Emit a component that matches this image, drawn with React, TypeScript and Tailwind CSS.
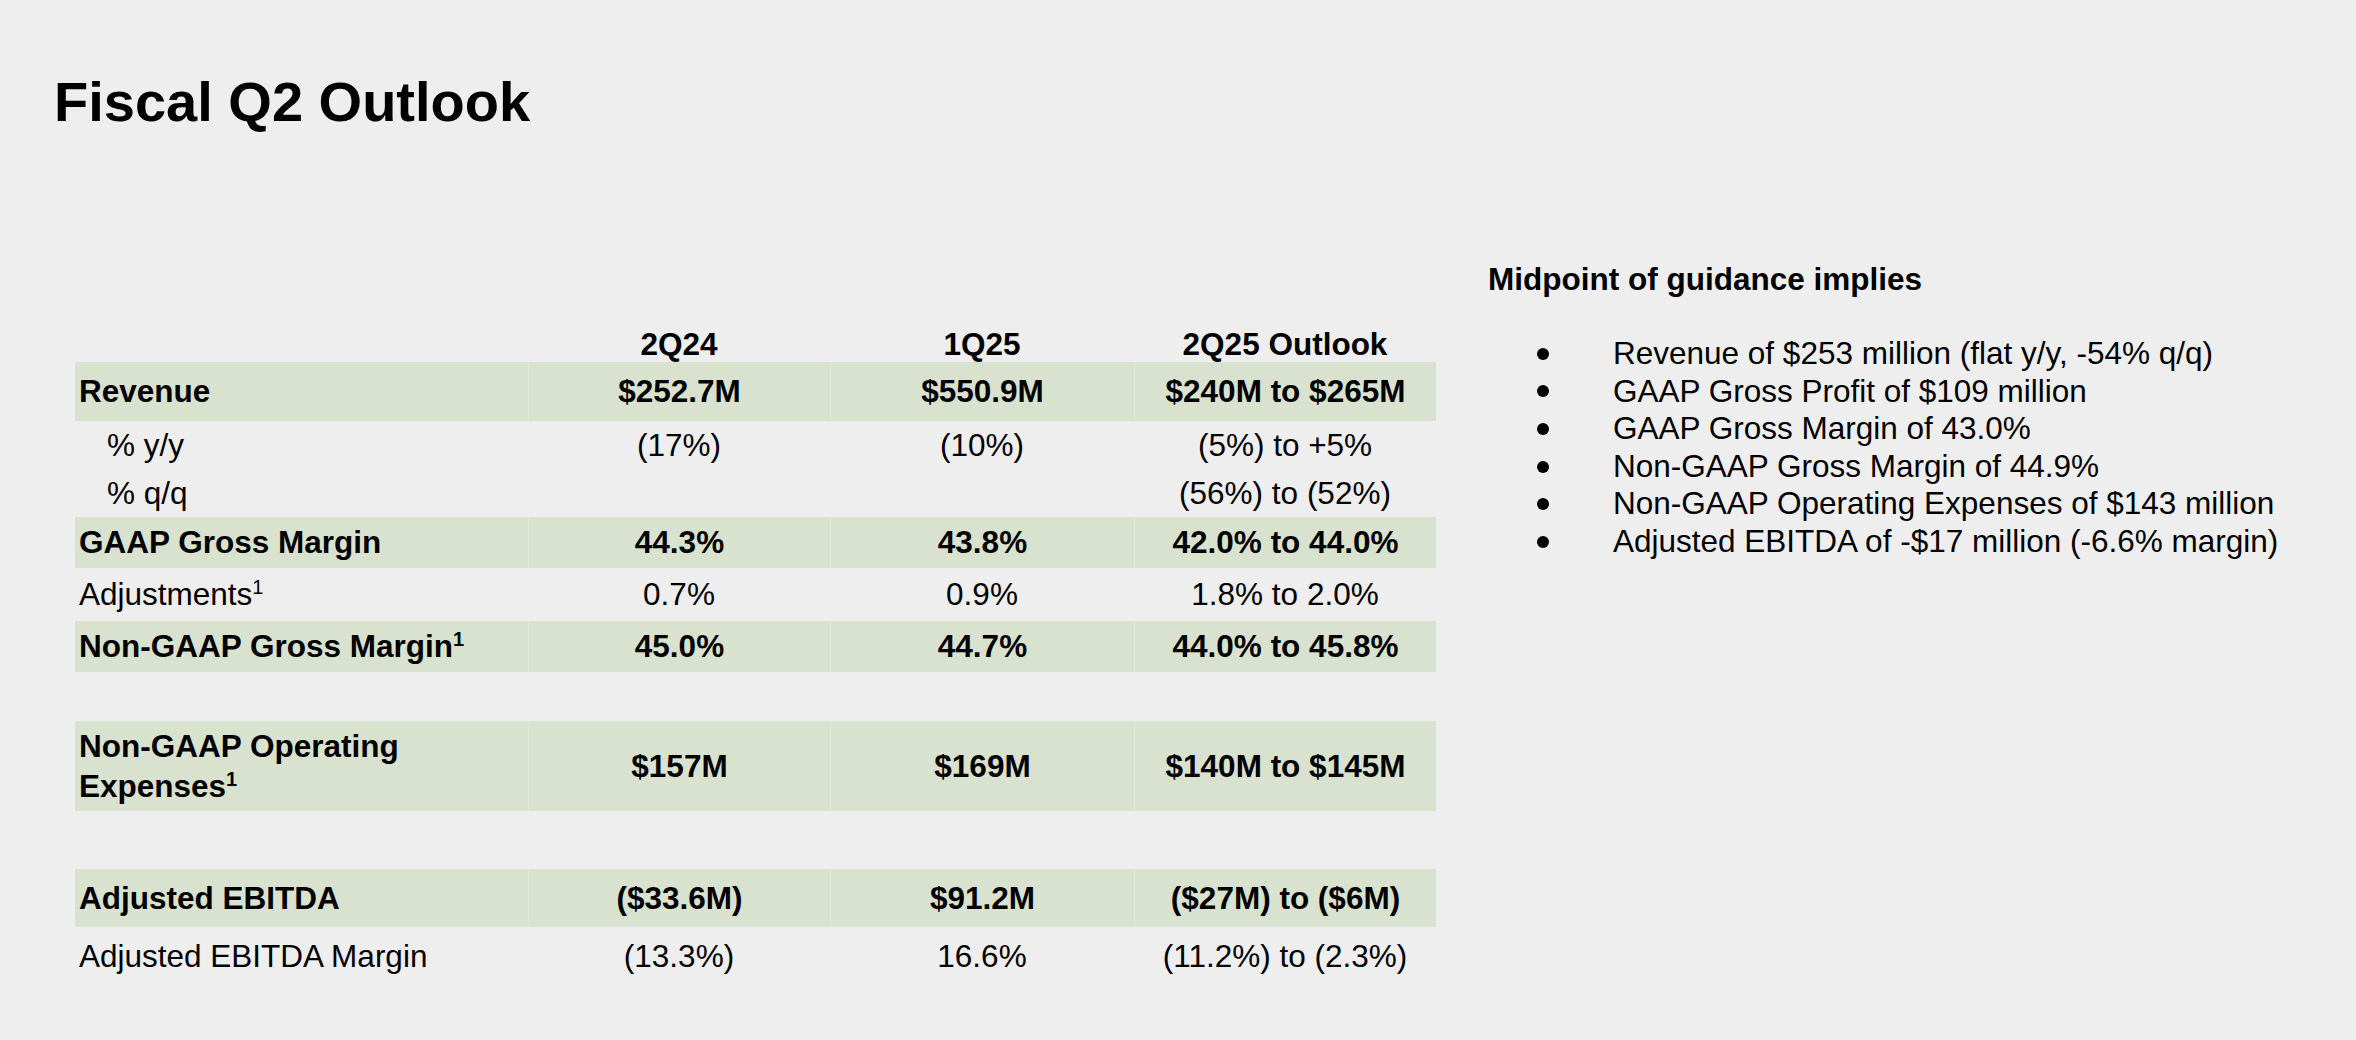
import React from "react";

type Row = {
  kind: "header" | "green" | "plain" | "spacer";
  h: number;
  label?: React.ReactNode;
  vals?: string[];
  indent?: boolean;
};

const Sup = () => (
  <sup className="text-[20px] relative -top-[11px] align-baseline leading-none">1</sup>
);

const rows: Row[] = [
  { kind: "header", h: 44, label: "", vals: ["2Q24", "1Q25", "2Q25 Outlook"] },
  { kind: "green", h: 59, label: "Revenue", vals: ["$252.7M", "$550.9M", "$240M to $265M"] },
  { kind: "plain", h: 48, label: "% y/y", indent: true, vals: ["(17%)", "(10%)", "(5%) to +5%"] },
  { kind: "plain", h: 48, label: "% q/q", indent: true, vals: ["", "", "(56%) to (52%)"] },
  { kind: "green", h: 51, label: "GAAP Gross Margin", vals: ["44.3%", "43.8%", "42.0% to 44.0%"] },
  {
    kind: "plain",
    h: 53,
    label: (
      <>
        Adjustments
        <Sup />
      </>
    ),
    vals: ["0.7%", "0.9%", "1.8% to 2.0%"],
  },
  {
    kind: "green",
    h: 51,
    label: (
      <>
        Non-GAAP Gross Margin
        <Sup />
      </>
    ),
    vals: ["45.0%", "44.7%", "44.0% to 45.8%"],
  },
  { kind: "spacer", h: 49 },
  {
    kind: "green",
    h: 90,
    label: (
      <span className="block leading-[40px]">
        Non-GAAP Operating
        <br />
        Expenses
        <Sup />
      </span>
    ),
    vals: ["$157M", "$169M", "$140M to $145M"],
  },
  { kind: "spacer", h: 58 },
  { kind: "green", h: 58, label: "Adjusted EBITDA", vals: ["($33.6M)", "$91.2M", "($27M) to ($6M)"] },
  {
    kind: "plain",
    h: 59,
    label: "Adjusted EBITDA Margin",
    vals: ["(13.3%)", "16.6%", "(11.2%) to (2.3%)"],
  },
];

const bullets = [
  "Revenue of $253 million (flat y/y, -54% q/q)",
  "GAAP Gross Profit of $109 million",
  "GAAP Gross Margin of 43.0%",
  "Non-GAAP Gross Margin of 44.9%",
  "Non-GAAP Operating Expenses of $143 million",
  "Adjusted EBITDA of -$17 million (-6.6% margin)",
];

function TableRow({ row }: { row: Row }) {
  if (row.kind === "spacer") {
    return <div style={{ height: row.h }} />;
  }
  const green = row.kind === "green";
  const bold = row.kind === "green" || row.kind === "header";
  const header = row.kind === "header";
  return (
    <div
      className={`grid grid-cols-[453px_302px_304px_302px] ${green ? "bg-[#d9e1cf]" : ""} ${
        bold ? "font-bold" : "font-normal"
      }`}
      style={{ height: row.h }}
    >
      <div
        className={`flex ${header ? "items-end pb-[2px]" : "items-center"} ${
          row.indent ? "pl-[32px]" : "pl-[4px]"
        }`}
      >
        <span className="leading-[31px]">{row.label}</span>
      </div>
      {row.vals!.map((v, i) => (
        <div
          key={i}
          className={`flex justify-center ${header ? "items-end pb-[2px]" : "items-center"} ${
            green ? "border-l border-[#e0e7d9]" : ""
          }`}
        >
          <span className="leading-[31px] whitespace-nowrap">{v}</span>
        </div>
      ))}
    </div>
  );
}

export default function App() {
  return (
    <div className="min-h-screen h-[1040px] w-full bg-[#eeeeee] text-black font-['Liberation_Sans',Arial,Helvetica,sans-serif] text-[31.5px] overflow-hidden">
      <div className="pl-[54px] pt-[74px]">
        <h1 className="text-[56px] leading-[56px] font-bold">Fiscal Q2 Outlook</h1>
        <div className="mt-[134px] flex pl-[21px]">
          <div className="mt-[54px] w-[1361px] shrink-0">
            {rows.map((r, i) => (
              <TableRow key={i} row={r} />
            ))}
          </div>
          <div className="ml-[52px]">
            <div className="font-bold leading-[31px]">Midpoint of guidance implies</div>
            <ul className="mt-[40px]">
              {bullets.map((b, i) => (
                <li key={i} className="flex items-center leading-[37.6px] h-[37.6px]">
                  <span className="ml-[49px] w-[12px] h-[12px] rounded-full bg-black shrink-0" />
                  <span className="ml-[64px] whitespace-nowrap">{b}</span>
                </li>
              ))}
            </ul>
          </div>
        </div>
      </div>
    </div>
  );
}
